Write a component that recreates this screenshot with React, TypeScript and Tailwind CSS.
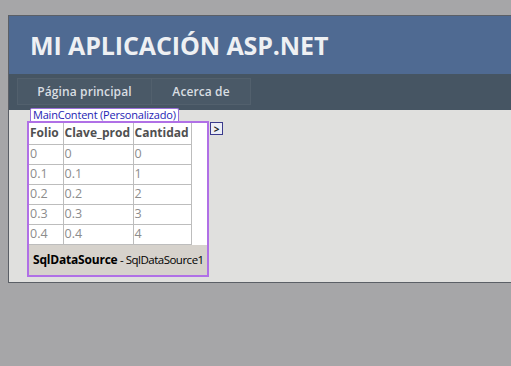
import React from "react";

const rows = [
  ["0", "0", "0"],
  ["0.1", "0.1", "1"],
  ["0.2", "0.2", "2"],
  ["0.3", "0.3", "3"],
  ["0.4", "0.4", "4"],
];

function App() {
  return (
    <div className="w-[511px] h-[366px] overflow-hidden bg-[#a6a6a8] pt-[15px] pl-[8px] font-['Open_Sans',sans-serif]">
      <div className="h-[268px] flex flex-col overflow-hidden border-l border-t border-b border-[#5b5f66]">
        {/* Header */}
        <div className="h-[58px] shrink-0 bg-[#4f6a92] flex items-center pl-[21px]">
          <h1 className="text-[25px] font-bold text-[#eef0f3] leading-none tracking-[-0.1px] mt-[1px]">
            MI APLICACIÓN ASP.NET
          </h1>
        </div>

        {/* Nav */}
        <div className="h-[36px] shrink-0 bg-[#465563] flex items-start pl-[8px] pt-[4px]">
          <div className="h-[27px] w-[135px] border border-[#52606d] bg-[#4a5967] flex items-center justify-center text-[12px] font-semibold text-[#d9dee2] tracking-[0.1px]">
            Página principal
          </div>
          <div className="h-[27px] w-[99px] border border-l-0 border-[#52606d] bg-[#4a5967] flex items-center justify-center text-[12px] font-semibold text-[#d9dee2] tracking-[0.1px]">
            Acerca de
          </div>
        </div>

        {/* Content */}
        <div className="flex-1 bg-[#e0e0de] pl-[18px] flex flex-col items-start">
          <div className="-mt-[2px] ml-[3px] h-[13px] border border-b-0 border-[#9a70dc] rounded-t-[2px] bg-white px-[2px] text-[11px] leading-[12px] text-[#2424b4] tracking-[-0.2px] whitespace-nowrap">
            MainContent (Personalizado)
          </div>
          <div className="flex items-start">
            <div className="w-[182px] shrink-0 border-2 border-[#b070e6] bg-white">
              <table className="border-collapse text-[12px] leading-none">
                <thead>
                  <tr className="h-[21px]">
                    <th className="w-[34px] border border-[#bdbdbd] border-t-0 border-l-0 px-[1px] text-left font-bold text-[#505050]">Folio</th>
                    <th className="w-[70px] border border-[#bdbdbd] border-t-0 px-[1px] text-left font-bold text-[#505050]">Clave_prod</th>
                    <th className="w-[58px] border border-[#bdbdbd] border-t-0 px-[1px] text-left font-bold text-[#505050]">Cantidad</th>
                  </tr>
                </thead>
                <tbody>
                  {rows.map((r, i) => (
                    <tr key={i} className="h-[20px]">
                      <td className="border border-[#bdbdbd] border-l-0 px-[1px] text-[12.5px] text-[#8c8c8c]">{r[0]}</td>
                      <td className="border border-[#bdbdbd] px-[1px] text-[12.5px] text-[#8c8c8c]">{r[1]}</td>
                      <td className="border border-[#bdbdbd] px-[1px] text-[12.5px] text-[#8c8c8c]">{r[2]}</td>
                    </tr>
                  ))}
                </tbody>
              </table>
              <div className="h-[30px] bg-[#d6d2cc] flex items-center pl-[4px] text-black whitespace-nowrap overflow-hidden">
                <span className="font-bold text-[12px] tracking-[-0.2px]">SqlDataSource</span>
                <span className="text-[11.5px] tracking-[-0.5px]">&nbsp;- SqlDataSource1</span>
              </div>
            </div>
            <div className="ml-[1px] mt-[1px] w-[13px] h-[13px] border border-[#3b3b8c] bg-[#eceef6] flex items-center justify-center text-[10px] font-bold leading-none text-[#222]">
              &gt;
            </div>
          </div>
        </div>
      </div>
    </div>
  );
}

export default App;
